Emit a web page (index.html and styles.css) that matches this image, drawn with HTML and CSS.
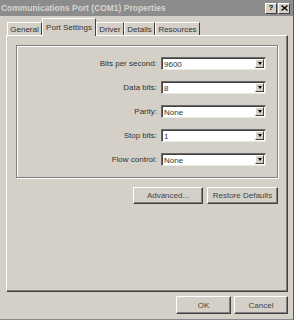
FILE: index.html
```html
<!DOCTYPE html>
<html>
<head>
<meta charset="utf-8">
<link rel="stylesheet" href="styles.css">
</head>
<body>
<div class="window">
  <div class="titlebar">
    <span class="title">Communications Port (COM1) Properties</span>
    <div class="tbtns">
      <span class="tbtn">?</span>
      <span class="tbtn">
        <svg width="7" height="6" viewBox="0 0 7 6"><path d="M0.5 0.5 L6.5 5.5 M6.5 0.5 L0.5 5.5" stroke="#000" stroke-width="1.3"/></svg>
      </span>
    </div>
  </div>
  <div class="tabs">
    <div class="tab t-general">General</div>
    <div class="tab t-port sel">Port Settings</div>
    <div class="tab t-driver">Driver</div>
    <div class="tab t-details">Details</div>
    <div class="tab t-res">Resources</div>
  </div>
  <div class="panel">
    <div class="group">
      <label class="lbl">Bits per second:</label>
      <div class="combo"><span class="val">9600</span><span class="drop"><i class="arrow"></i></span></div>
      <label class="lbl">Data bits:</label>
      <div class="combo"><span class="val">8</span><span class="drop"><i class="arrow"></i></span></div>
      <label class="lbl">Parity:</label>
      <div class="combo"><span class="val">None</span><span class="drop"><i class="arrow"></i></span></div>
      <label class="lbl">Stop bits:</label>
      <div class="combo"><span class="val">1</span><span class="drop"><i class="arrow"></i></span></div>
      <label class="lbl">Flow control:</label>
      <div class="combo"><span class="val">None</span><span class="drop"><i class="arrow"></i></span></div>
    </div>
    <div class="btnrow">
      <div class="btn b-adv">Advanced...</div>
      <div class="btn b-restore">Restore Defaults</div>
    </div>
  </div>
  <div class="footer">
    <div class="btn b-ok">OK</div>
    <div class="btn b-cancel">Cancel</div>
  </div>
</div>
</body>
</html>
```
FILE: styles.css
```css
html, body {
  margin: 0;
  padding: 0;
  background: #d4d0c8;
}
body {
  width: 294px;
  height: 320px;
  overflow: hidden;
  font-family: "Liberation Sans", Arial, sans-serif;
  font-size: 8px;
  color: #2a2a2a;
}
.window {
  width: 294px;
  height: 320px;
  box-sizing: border-box;
  background: #d4d0c8;
  border-right: 1px solid #5a5a5a;
  border-bottom: 1px solid #8a8a8a;
}
.titlebar {
  height: 16px;
  background: #8c8c8c;
  display: flex;
  align-items: center;
  justify-content: space-between;
  padding: 0 3px 0 1px;
}
.title {
  font-weight: bold;
  font-size: 8.4px;
  color: #d8d4cc;
  letter-spacing: 0.05px;
}
.tbtns {
  display: flex;
  gap: 1px;
}
.tbtn {
  width: 10px;
  height: 9px;
  background: #d4d0c8;
  border: 1px solid;
  border-color: #ffffff #404040 #404040 #ffffff;
  display: flex;
  align-items: center;
  justify-content: center;
  font-weight: bold;
  font-size: 8px;
  color: #000;
  line-height: 1;
}
.tabs {
  display: flex;
  align-items: flex-end;
  height: 19px;
  padding-left: 7px;
}
.tab {
  height: 13px;
  box-sizing: border-box;
  border: 1px solid;
  border-bottom: none;
  border-color: #ffffff #404040 transparent #ffffff;
  display: flex;
  align-items: center;
  justify-content: center;
  padding-top: 1px;
  white-space: nowrap;
  color: #333;
}
.tab.sel {
  height: 18px;
  margin-bottom: -1px;
  background: #d4d0c8;
  position: relative;
  z-index: 1;
  padding-bottom: 2px;
}
.t-general { width: 35px; }
.t-port { width: 54px; }
.t-driver { width: 28px; }
.t-details { width: 31px; }
.t-res { width: 45px; }
.panel {
  margin: 0 5px 0 6px;
  height: 257px;
  box-sizing: border-box;
  border-top: 1px solid #ffffff;
  border-left: 1px solid #ffffff;
  border-right: 1px solid #404040;
  border-bottom: 1px solid #404040;
  box-shadow: inset -1px -1px #808080;
  padding-top: 9px;
}
.group {
  margin: 0 9px;
  height: 133px;
  box-sizing: border-box;
  border: 1px solid #808080;
  box-shadow: inset 1px 1px #ffffff, 1px 1px #ffffff;
  display: grid;
  grid-template-columns: 1fr 105px;
  grid-auto-rows: 13px;
  column-gap: 4px;
  row-gap: 11px;
  padding: 11px 11px 0 0;
}
.lbl {
  display: flex;
  align-items: center;
  justify-content: flex-end;
  white-space: nowrap;
  color: #333;
}
.combo {
  box-sizing: border-box;
  background: #fff;
  border: 1px solid;
  border-color: #6a6a6a #e8e8e8 #e8e8e8 #6a6a6a;
  box-shadow: inset 1px 1px #404040;
  display: flex;
  align-items: stretch;
}
.val {
  flex: 1;
  display: flex;
  align-items: center;
  padding-left: 2px;
  padding-top: 1px;
  color: #333;
}
.drop {
  width: 9px;
  margin: 1px 1px 1px 0;
  box-sizing: border-box;
  background: #d4d0c8;
  border: 1px solid;
  border-color: #ffffff #404040 #404040 #ffffff;
  display: flex;
  align-items: center;
  justify-content: center;
}
.arrow {
  width: 0;
  height: 0;
  border-left: 2.5px solid transparent;
  border-right: 2.5px solid transparent;
  border-top: 3px solid #000;
}
.btnrow {
  display: flex;
  justify-content: flex-end;
  gap: 4px;
  margin: 9px 9px 0 0;
}
.btn {
  height: 17px;
  box-sizing: border-box;
  background: #d4d0c8;
  border: 1px solid;
  border-color: #ffffff #404040 #404040 #ffffff;
  box-shadow: inset -1px -1px #808080;
  display: flex;
  align-items: center;
  justify-content: center;
  white-space: nowrap;
  color: #444;
}
.b-adv { width: 70px; }
.b-restore { width: 71px; }
.footer {
  display: flex;
  justify-content: flex-end;
  gap: 3px;
  margin: 4px 5px 0 0;
}
.b-ok { width: 55px; height: 18px; }
.b-cancel { width: 54px; height: 18px; }
```
